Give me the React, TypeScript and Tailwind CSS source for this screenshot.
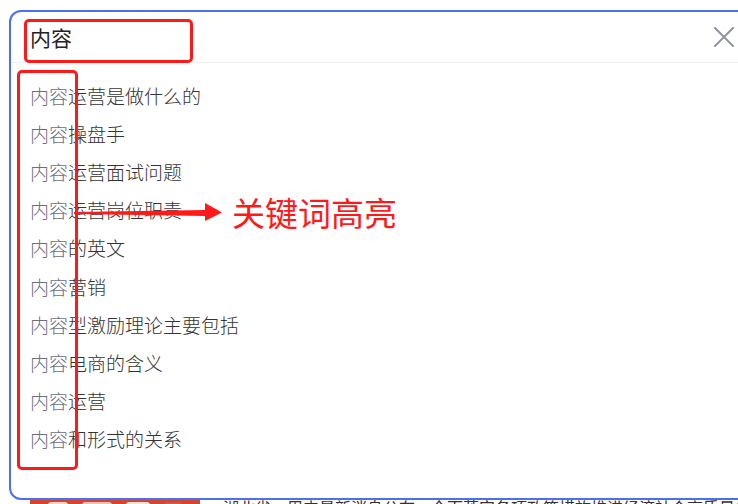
import React from "react";

const suggestions = [
  "内容运营是做什么的",
  "内容操盘手",
  "内容运营面试问题",
  "内容运营岗位职责",
  "内容的英文",
  "内容营销",
  "内容型激励理论主要包括",
  "内容电商的含义",
  "内容运营",
  "内容和形式的关系",
];

const keyword = "内容";

export default function App() {
  return (
    <div
      className="relative w-[738px] h-[504px] overflow-hidden bg-white"
      style={{ fontFamily: '"Noto Sans CJK SC", "Noto Sans", sans-serif' }}
    >
      {/* SEARCH DROPDOWN */}
      <div className="ml-[9px] mt-[10px] w-[760px] h-[490px] rounded-[12px] border-2 border-[#4e6ef2] bg-white flex flex-col">
        <div className="h-[51px] shrink-0 flex items-center justify-between border-b border-[#f0f0f0] pl-[19px] pr-[33px]">
          <span className="text-[21px] leading-none text-[#222]">{keyword}</span>
          <svg width="20" height="20" viewBox="0 0 20 20">
            <path d="M1 1 L19 19 M19 1 L1 19" stroke="#9195a3" strokeWidth="2" strokeLinecap="round" />
          </svg>
        </div>
        <ul className="pt-[13px] pl-[19px]">
          {suggestions.map((s) => (
            <li key={s} className="h-[38.2px] flex items-center text-[19px] leading-none text-[#333] font-light">
              <span className="text-[#6b6f7e]">{keyword}</span>
              {s.slice(keyword.length)}
            </li>
          ))}
        </ul>
      </div>

      {/* PAGE CONTENT BELOW (cut off) */}
      <div className="flex items-start gap-[23px] pl-[30px] h-[10px] overflow-hidden">
        <div className="w-[177px] h-[10px] bg-[#d2462f] flex gap-[14px] px-[18px] pt-[2px]">
          <div className="w-[20px] h-[6px] rounded-full bg-[#f3d6c8]" />
          <div className="w-[30px] h-[6px] rounded-full bg-[#e9c2b6]" />
          <div className="w-[24px] h-[6px] rounded-full bg-[#f1e3d8]" />
          <div className="w-[18px] h-[6px] rounded-full bg-[#c9584a]" />
        </div>
        <div className="text-[16px] leading-[16px] text-[#333] mt-[-1px] whitespace-nowrap">
          湖北省一周内最新消息公布，全面落实各项政策措施推进经济社会高质量发展的工作部署
        </div>
      </div>

      {/* ANNOTATIONS */}
      <div className="absolute left-[24px] top-[19px] w-[169px] h-[44px] border-[3px] border-[#ff1a1a] rounded-[5px]" />
      <div className="absolute left-[17px] top-[70px] w-[61px] h-[400px] border-[3px] border-[#ff1a1a] rounded-[5px]" />
      <svg className="absolute left-[74px] top-[200px]" width="150" height="24" viewBox="0 0 150 24">
        <polygon points="0,12 131,10 131,3 148,12.5 131,21 131,16 0,14" fill="#ff1a1a" />
      </svg>
      <div className="absolute left-[232px] top-[192px] text-[33px] leading-[40px] text-[#ff1a1a]">
        关键词高亮
      </div>
    </div>
  );
}
